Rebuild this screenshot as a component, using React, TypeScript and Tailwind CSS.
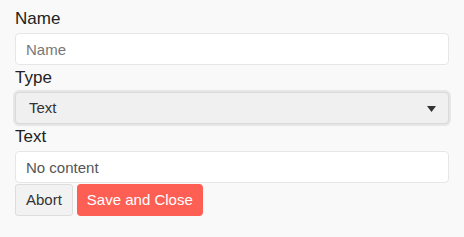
import { useState } from "react";

const font = { fontFamily: '"Liberation Sans", Arial, sans-serif' };

export default function App() {
  const [name, setName] = useState("");
  const [type, setType] = useState("Text");

  return (
    <div className="min-h-[237px] w-[464px] bg-[#f9f9f9] px-[15px] pt-[9px]" style={font}>
      {/* Name */}
      <label className="block text-[17px] leading-[20px] text-[#222] mb-[4px]">Name</label>
      <input
        value={name}
        onChange={e => setName(e.target.value)}
        placeholder="Name"
        className="block w-[434px] h-[32px] rounded-[4px] border border-[#e6e6e6] bg-white px-[10px] text-[15px] text-[#555] placeholder-[#777] outline-none"
      />

      {/* Type */}
      <label className="block mt-[3px] text-[17px] leading-[20px] text-[#222] mb-[4px]">Type</label>
      <div className="relative w-[434px] h-[32px] rounded-[4px] border border-[#d9d9d9] bg-[#f0f0f0] shadow-[0_0_0_2px_#e6e6e6]">
        <select
          value={type}
          onChange={e => setType(e.target.value)}
          className="appearance-none w-full h-full bg-transparent pl-[13px] pr-8 text-[15px] text-[#333] outline-none"
        >
          <option>Text</option>
          <option>Number</option>
          <option>Date</option>
        </select>
        <svg className="absolute right-[12px] top-[13px] pointer-events-none" width="9" height="6" viewBox="0 0 9 6">
          <path d="M0 0h9L4.5 6z" fill="#333" />
        </svg>
      </div>

      {/* Text */}
      <label className="block mt-[3px] text-[17px] leading-[20px] text-[#222] mb-[4px]">Text</label>
      <input
        placeholder="No content"
        className="block w-[434px] h-[32px] rounded-[4px] border border-[#e6e6e6] bg-white px-[10px] text-[15px] text-[#555] placeholder-[#555] outline-none"
      />

      {/* Actions */}
      <div className="flex gap-[4px] mt-[1px]">
        <button className="h-[32px] px-[10px] rounded-[3px] border border-[#ddd] bg-[#f2f2f2] text-[15px] text-[#333]">
          Abort
        </button>
        <button className="h-[32px] px-[10px] rounded-[4px] bg-[#fe5f55] text-[15px] text-white">
          Save and Close
        </button>
      </div>
    </div>
  );
}
